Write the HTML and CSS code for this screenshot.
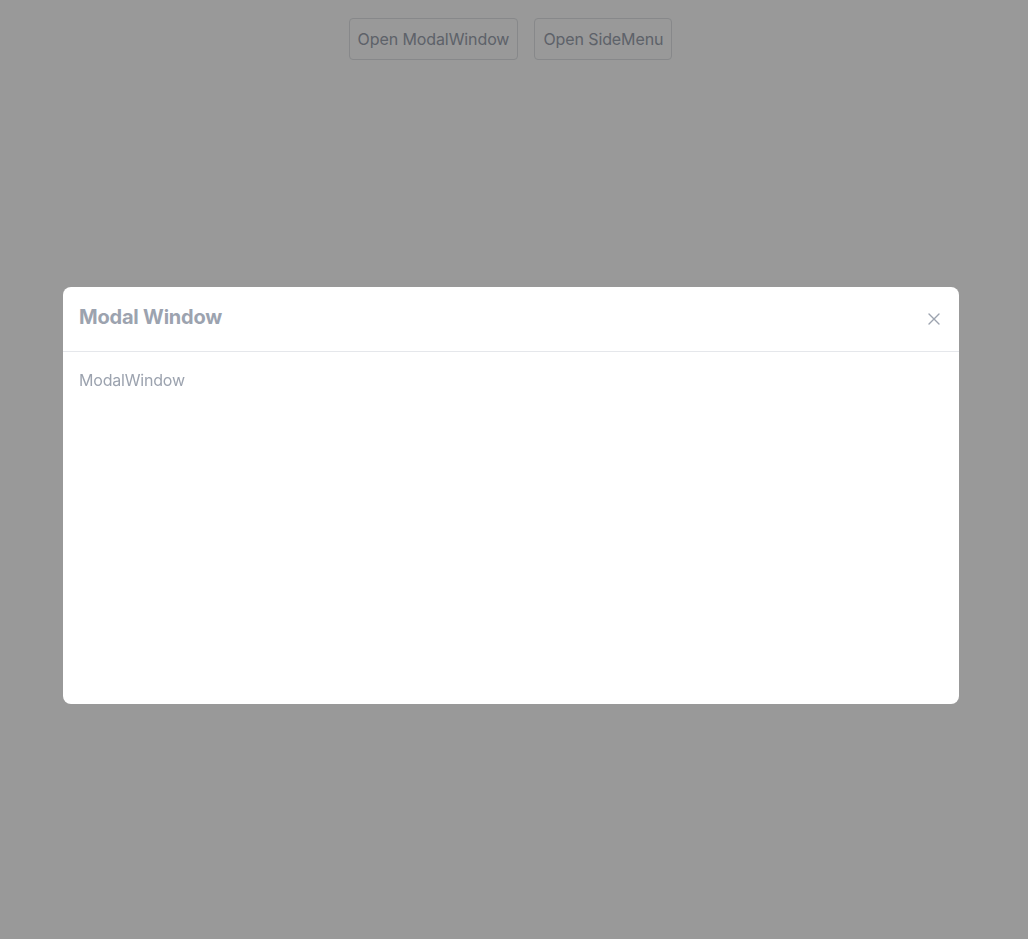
FILE: index.html
```html
<!DOCTYPE html>
<html lang="en">
<head>
<meta charset="utf-8">
<title>Modal</title>
<link rel="stylesheet" href="styles.css">
</head>
<body>
  <div class="toolbar">
    <button class="btn">Open ModalWindow</button>
    <button class="btn">Open SideMenu</button>
  </div>
  <div class="overlay">
    <div class="modal">
      <div class="modal-header">
        <h2 class="modal-title">Modal Window</h2>
        <button class="close" aria-label="Close">
          <svg width="12" height="12" viewBox="0 0 12 12"><path d="M1 1L11 11M11 1L1 11" stroke="#9ca3af" stroke-width="1.4" stroke-linecap="round"/></svg>
        </button>
      </div>
      <div class="modal-body">ModalWindow</div>
    </div>
  </div>
</body>
</html>
```
FILE: styles.css
```css
* { box-sizing: border-box; }
html, body { margin: 0; padding: 0; }
body {
  background: #ffffff;
  font-family: Inter, "Noto Sans", sans-serif;
  color: #9ca3af;
  height: 939px;
  letter-spacing: -0.0125em;
}
.toolbar {
  display: flex;
  justify-content: center;
  gap: 16px;
  padding: 18px 7px 0 0;
}
.btn {
  font-family: Inter, "Noto Sans", sans-serif;
  font-size: 16px;
  line-height: 24px;
  letter-spacing: -0.006em;
  color: #9ca3af;
  background: #ffffff;
  border: 1px solid #e1e3e6;
  border-radius: 4px;
  padding: 8px 8px;
}
.overlay {
  position: fixed;
  inset: 0;
  background: rgba(0, 0, 0, 0.4);
  display: flex;
  justify-content: center;
  align-items: flex-start;
  padding: 287px 6px 0 0;
}
.modal {
  width: 896px;
  height: 417px;
  background: #ffffff;
  border-radius: 8px;
  display: flex;
  flex-direction: column;
}
.modal-header {
  height: 65px;
  border-bottom: 1px solid #e5e7eb;
  display: flex;
  align-items: center;
  justify-content: space-between;
  padding: 0 18px 4px 16px;
}
.modal-title {
  margin: 0;
  font-size: 20px;
  line-height: 28px;
  font-weight: 700;
  color: #9ca3af;
}
.close {
  background: none;
  border: 0;
  padding: 0;
  width: 14px;
  height: 14px;
  display: flex;
  align-items: center;
  justify-content: center;
  margin-top: 3px;
}
.modal-body {
  padding: 16px;
  font-size: 16px;
  line-height: 24px;
  color: #9ca3af;
}
```
